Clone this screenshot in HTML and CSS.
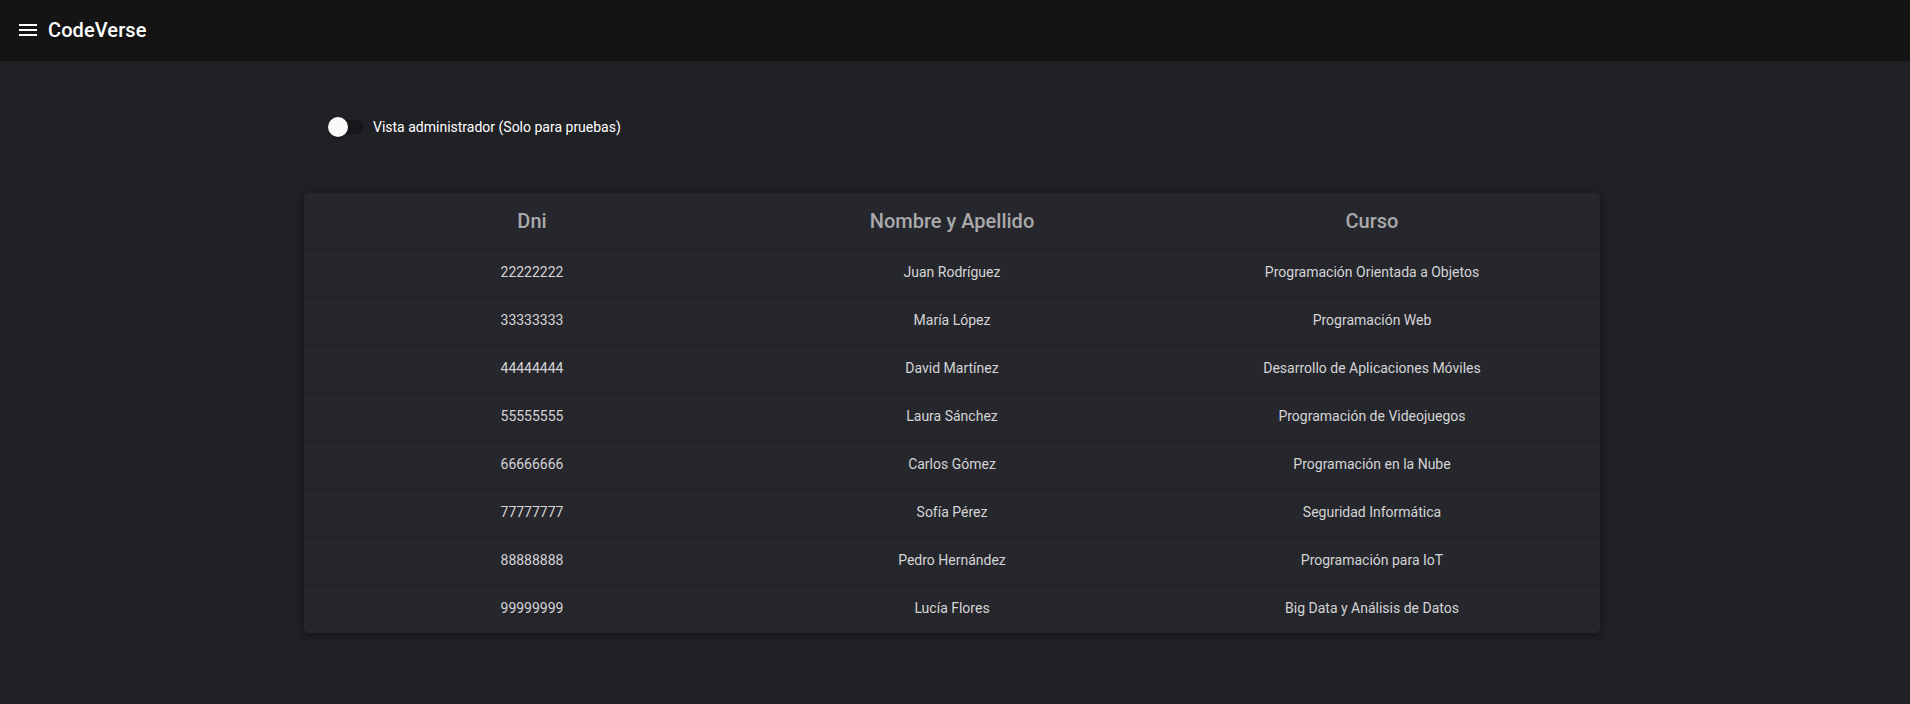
FILE: index.html
```html
<!DOCTYPE html>
<html lang="es">
<head>
<meta charset="UTF-8" />
<meta name="viewport" content="width=device-width, initial-scale=1" />
<title>CodeVerse</title>
<link rel="stylesheet" href="styles.css">
</head>
<body>

<header class="app-bar">
  <button class="menu-btn" title="Menú">
    <svg viewBox="0 0 24 24" width="24" height="24"><path d="M3 6h18v2H3zM3 11h18v2H3zM3 16h18v2H3z" fill="#fff"/></svg>
  </button>
  <div class="app-title">CodeVerse</div>
</header>

<main class="content">
  <label class="switch-row">
    <span class="switch">
      <span class="switch-track"></span>
      <span class="switch-thumb"></span>
    </span>
    <span class="switch-label">Vista administrador (Solo para pruebas)</span>
  </label>

  <div class="card">
    <table class="alumnos">
      <colgroup>
        <col class="col-side">
        <col class="col-mid">
        <col class="col-side">
      </colgroup>
      <thead>
        <tr><th>Dni</th><th>Nombre y Apellido</th><th>Curso</th></tr>
      </thead>
      <tbody>
        <tr><td>22222222</td><td>Juan Rodríguez</td><td>Programación Orientada a Objetos</td></tr>
        <tr><td>33333333</td><td>María López</td><td>Programación Web</td></tr>
        <tr><td>44444444</td><td>David Martínez</td><td>Desarrollo de Aplicaciones Móviles</td></tr>
        <tr><td>55555555</td><td>Laura Sánchez</td><td>Programación de Videojuegos</td></tr>
        <tr><td>66666666</td><td>Carlos Gómez</td><td>Programación en la Nube</td></tr>
        <tr><td>77777777</td><td>Sofía Pérez</td><td>Seguridad Informática</td></tr>
        <tr><td>88888888</td><td>Pedro Hernández</td><td>Programación para IoT</td></tr>
        <tr><td>99999999</td><td>Lucía Flores</td><td>Big Data y Análisis de Datos</td></tr>
      </tbody>
    </table>
  </div>
</main>

</body>
</html>
```

FILE: styles.css
```css
body {
  font-family: Roboto, "Liberation Sans", sans-serif;
  margin: 0; padding: 0;
  background: #202125;
  color: #fff;
  min-height: 100vh;
}
.app-bar {
  height: 61px;
  background: #141414;
  display: flex;
  align-items: center;
  padding: 0 15px 1px 16px;
  gap: 8px;
  box-sizing: border-box;
}
.menu-btn {
  background: none;
  border: none;
  padding: 0;
  width: 24px;
  height: 24px;
  cursor: pointer;
  display: flex;
}
.app-title {
  font-size: 20px;
  font-weight: 500;
  letter-spacing: 0.1px;
}
.content {
  width: 1296px;
  margin-left: 304px;
  padding-top: 46px;
}
.switch-row {
  display: flex;
  align-items: center;
  height: 40px;
  padding-left: 24px;
  gap: 9px;
  cursor: pointer;
}
.switch {
  position: relative;
  width: 36px;
  height: 20px;
}
.switch-track {
  position: absolute;
  left: 0; right: 0;
  top: 3px;
  height: 14px;
  border-radius: 7px;
  background: #16171a;
}
.switch-thumb {
  position: absolute;
  left: 0; top: 0;
  width: 20px; height: 20px;
  border-radius: 50%;
  background: #fafafa;
  box-shadow: 0 1px 3px rgba(0,0,0,0.4);
}
.switch-label {
  font-size: 14px;
  color: #fff;
}
.card {
  margin-top: 46px;
  background: #26272c;
  border-radius: 5px;
  box-shadow: 0 3px 6px rgba(0,0,0,0.3), 0 1px 10px rgba(0,0,0,0.15);
  overflow: hidden;
}
.alumnos {
  width: 100%;
  border-collapse: collapse;
  table-layout: fixed;
}
.col-side { width: 456px; }
.col-mid { width: 384px; }
.alumnos th {
  height: 56px;
  font-size: 20px;
  font-weight: 500;
  color: #a9a9ab;
  text-align: center;
  padding: 0 16px;
}
.alumnos td {
  height: 44px;
  padding: 0 16px 3px;
  font-size: 14px;
  color: #d4d4d6;
  text-align: center;
  border-top: 1px solid #1f2024;
}
```
